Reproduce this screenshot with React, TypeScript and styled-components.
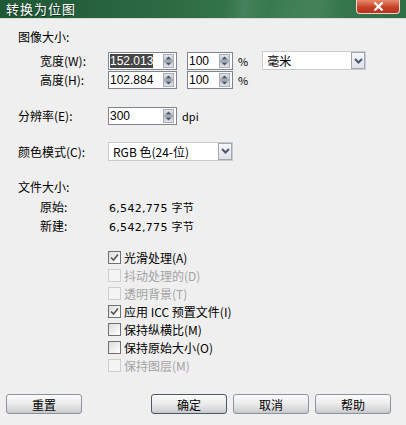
import React from 'react';
import styled, { createGlobalStyle } from 'styled-components';

const GlobalStyle = createGlobalStyle`
  html, body {
    margin: 0;
    padding: 0;
    background: #efefef;
  }
  * {
    box-sizing: border-box;
  }
`;

const Window = styled.div`
  width: 406px;
  height: 425px;
  background: #efefef;
  font-family: "Noto Sans CJK SC", "DejaVu Sans", sans-serif;
  font-size: 12px;
  color: #000;
  display: flex;
  flex-direction: column;
  overflow: hidden;
`;

const TitleBar = styled.div`
  height: 19px;
  flex: none;
  display: flex;
  justify-content: space-between;
  align-items: flex-start;
  background:
    linear-gradient(100deg, transparent 55%, rgba(255, 255, 255, 0.08) 60%, transparent 66%, rgba(255, 255, 255, 0.07) 78%, transparent 84%),
    linear-gradient(90deg, #1f5734 0%, #2c6a44 40%, #3a7c52 70%, #2f6f48 100%);
  border-bottom: 1px solid #d8dcd8;
`;

const Title = styled.div`
  color: #fff;
  font-size: 13px;
  line-height: 18px;
  height: 18px;
  padding-left: 6px;
  letter-spacing: 1px;
  text-shadow: 1px 1px 0 rgba(0, 0, 0, 0.45);
`;

const CloseButton = styled.div`
  width: 44px;
  height: 14px;
  margin-right: 6px;
  border: 1px solid #f2d4c8;
  border-top: none;
  border-radius: 0 0 4px 4px;
  background: linear-gradient(180deg, #e98a6c 0%, #c6432a 55%, #b8321d 100%);
  display: flex;
  align-items: center;
  justify-content: center;
`;

const Body = styled.div`
  flex: 1;
  display: flex;
  flex-direction: column;
  padding: 0 0 0 18px;
`;

const Heading = styled.div<{ $top: number }>`
  height: 19px;
  line-height: 19px;
  margin-top: ${p => p.$top}px;
`;

const Row = styled.div<{ $top?: number; $height?: number }>`
  display: flex;
  align-items: center;
  height: ${p => p.$height ?? 19}px;
  margin-top: ${p => p.$top ?? 0}px;
`;

const RowLabel = styled.div<{ $indent?: boolean }>`
  width: ${p => (p.$indent ? 68 : 90)}px;
  margin-left: ${p => (p.$indent ? 22 : 0)}px;
  flex: none;
`;

const Field = styled.div<{ $width: number; $left?: number }>`
  width: ${p => p.$width}px;
  height: 18px;
  margin-left: ${p => p.$left ?? 0}px;
  border: 1px solid #7f8590;
  background: #fff;
  display: flex;
  align-items: center;
  padding: 0 2px 0 1px;
  flex: none;
`;

const FieldText = styled.div`
  flex: 1;
  font-family: "Liberation Sans", "Noto Sans CJK SC", sans-serif;
  font-size: 12px;
  line-height: 14px;
`;

const Selected = styled.span`
  background: #454545;
  color: #fff;
`;

const Unit = styled.div<{ $gap: number }>`
  margin-left: ${p => p.$gap}px;
  font-size: 11px;
  flex: none;
`;

const Select = styled.div<{ $width: number; $left: number }>`
  width: ${p => p.$width}px;
  height: 19px;
  margin-left: ${p => p.$left}px;
  border: 1px solid #c8cbd0;
  background: #fff;
  display: flex;
  align-items: center;
  padding-left: 4px;
  flex: none;
`;

const SelectText = styled.div`
  flex: 1;
`;

const ArrowButton = styled.div`
  width: 14px;
  height: 17px;
  border: 1px solid #a0a7b3;
  background: linear-gradient(180deg, #f6f7f9, #dfe3e9);
  display: flex;
  align-items: center;
  justify-content: center;
`;

const Value = styled.div`
  margin-left: 1px;
  font-family: "DejaVu Sans", "Noto Sans CJK SC", sans-serif;
  font-size: 11px;
  letter-spacing: 0.3px;
`;

const Checks = styled.div`
  display: flex;
  flex-direction: column;
  margin-top: 13px;
  padding-left: 90px;
`;

const CheckRow = styled.div<{ $disabled?: boolean }>`
  display: flex;
  align-items: center;
  height: 18px;
  color: ${p => (p.$disabled ? '#a3a3a3' : '#000')};
`;

const Box = styled.div<{ $disabled?: boolean }>`
  width: 13px;
  height: 13px;
  border: 1px solid ${p => (p.$disabled ? '#cfcfcf' : '#707070')};
  background: ${p => (p.$disabled ? '#f4f4f4' : 'linear-gradient(135deg, #dcdcdc, #ffffff)')};
  margin-right: 3px;
  display: flex;
  align-items: center;
  justify-content: center;
`;

const Buttons = styled.div`
  display: flex;
  justify-content: space-between;
  margin-top: 20px;
  margin-left: -12px;
  padding-right: 15px;
`;

const ButtonGroup = styled.div`
  display: flex;
  gap: 6px;
`;

const Button = styled.div<{ $default?: boolean }>`
  width: 76px;
  height: 20px;
  border: 1px solid ${p => (p.$default ? '#4c5866' : '#8b939e')};
  border-radius: 3px;
  background: linear-gradient(180deg, #fbfbfb 0%, #ececec 45%, #d4d6d9 85%, #c4c7cb 100%);
  display: flex;
  align-items: center;
  justify-content: center;
  font-size: 12px;
`;

const Spinner = () => (
  <svg width="11" height="14" viewBox="0 0 11 14">
    <defs>
      <linearGradient id="sp" x1="0" y1="0" x2="0" y2="1">
        <stop offset="0" stopColor="#e4e7ec" />
        <stop offset="0.5" stopColor="#b9bec7" />
        <stop offset="1" stopColor="#e4e7ec" />
      </linearGradient>
    </defs>
    <rect x="0.5" y="0.5" width="10" height="13" fill="url(#sp)" stroke="#a9aeb6" />
    <line x1="1" y1="7" x2="10" y2="7" stroke="#8e949e" />
    <path d="M2.5 5.5 L5.5 2.5 L8.5 5.5 Z" fill="#4e5868" />
    <path d="M2.5 8.5 L5.5 11.5 L8.5 8.5 Z" fill="#4e5868" />
  </svg>
);

const Chevron = () => (
  <svg width="9" height="6" viewBox="0 0 9 6">
    <path d="M1 1 L4.5 4.5 L8 1" fill="none" stroke="#4a5672" strokeWidth="2" />
  </svg>
);

const Tick = () => (
  <svg width="9" height="9" viewBox="0 0 9 9">
    <path d="M1 4.5 L3.5 7 L8 1.5" fill="none" stroke="#555" strokeWidth="1.6" />
  </svg>
);

const checkboxes = [
  { label: '光滑处理(A)', checked: true },
  { label: '抖动处理的(D)', disabled: true },
  { label: '透明背景(T)', disabled: true },
  { label: '应用 ICC 预置文件(I)', checked: true },
  { label: '保持纵横比(M)' },
  { label: '保持原始大小(O)' },
  { label: '保持图层(M)', disabled: true },
];

export default function App() {
  return (
    <Window>
      <GlobalStyle />
      <TitleBar>
        <Title>转换为位图</Title>
        <CloseButton>
          <svg width="11" height="9" viewBox="0 0 11 9">
            <path d="M1.5 0.5 L9.5 8.5 M9.5 0.5 L1.5 8.5" stroke="#fff" strokeWidth="2.2" />
          </svg>
        </CloseButton>
      </TitleBar>

      <Body>
        <Heading $top={8}>图像大小:</Heading>
        <Row $top={5}>
          <RowLabel $indent>宽度(W):</RowLabel>
          <Field $width={69}>
            <FieldText><Selected>152.013</Selected></FieldText>
            <Spinner />
          </Field>
          <Field $width={46} $left={10}>
            <FieldText>100</FieldText>
            <Spinner />
          </Field>
          <Unit $gap={5}>%</Unit>
          <Select $width={104} $left={14}>
            <SelectText>毫米</SelectText>
            <ArrowButton><Chevron /></ArrowButton>
          </Select>
        </Row>
        <Row>
          <RowLabel $indent>高度(H):</RowLabel>
          <Field $width={69}>
            <FieldText>102.884</FieldText>
            <Spinner />
          </Field>
          <Field $width={46} $left={10}>
            <FieldText>100</FieldText>
            <Spinner />
          </Field>
          <Unit $gap={5}>%</Unit>
        </Row>

        <Row $top={17}>
          <RowLabel>分辨率(E):</RowLabel>
          <Field $width={69}>
            <FieldText>300</FieldText>
            <Spinner />
          </Field>
          <Unit $gap={5}>dpi</Unit>
        </Row>

        <Row $top={16} $height={20}>
          <RowLabel>颜色模式(C):</RowLabel>
          <Select $width={125} $left={0}>
            <SelectText>RGB 色(24-位)</SelectText>
            <ArrowButton><Chevron /></ArrowButton>
          </Select>
        </Row>

        <Heading $top={16}>文件大小:</Heading>
        <Row $top={1}>
          <RowLabel $indent>原始:</RowLabel>
          <Value>6,542,775 字节</Value>
        </Row>
        <Row>
          <RowLabel $indent>新建:</RowLabel>
          <Value>6,542,775 字节</Value>
        </Row>

        <Checks>
          {checkboxes.map(c => (
            <CheckRow key={c.label} $disabled={c.disabled}>
              <Box $disabled={c.disabled}>{c.checked && <Tick />}</Box>
              {c.label}
            </CheckRow>
          ))}
        </Checks>

        <Buttons>
          <Button>重置</Button>
          <ButtonGroup>
            <Button $default>确定</Button>
            <Button>取消</Button>
            <Button>帮助</Button>
          </ButtonGroup>
        </Buttons>
      </Body>
    </Window>
  );
}
